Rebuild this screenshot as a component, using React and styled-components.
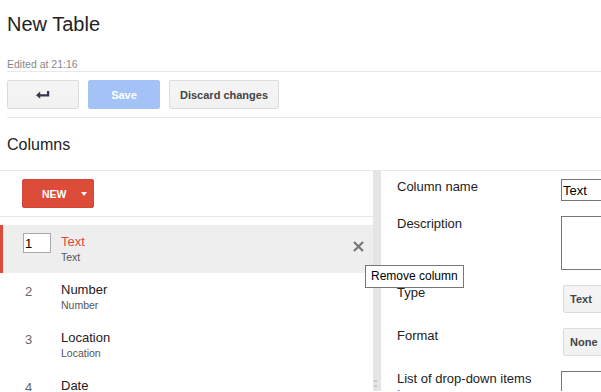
import React from "react";
import styled, { createGlobalStyle, css } from "styled-components";

const GlobalStyle = createGlobalStyle`
  html, body { margin: 0; padding: 0; background: #fff; overflow: hidden; }
  body { font-family: "Liberation Sans", Arial, sans-serif; color: #222; }
  * { box-sizing: border-box; }
`;

const Page = styled.div`
  position: relative;
  width: 100%;
  height: 100vh;
  overflow: hidden;
`;

const Header = styled.header`
  padding: 12px 0 0 7px;
`;

const Title = styled.h1`
  margin: 0;
  font-size: 20px;
  line-height: 24px;
  font-weight: normal;
  color: #222;
`;

const Edited = styled.div`
  margin-top: 22px;
  font-size: 10.5px;
  line-height: 13px;
  color: #888;
`;

const Rule = styled.div`
  height: 1px;
  background: #e8e8e8;
`;

const Toolbar = styled.div`
  display: flex;
  gap: 9px;
  padding: 8px 0;
`;

const Button = styled.button`
  height: 29px;
  min-width: 72px;
  padding: 0 10px;
  border-radius: 2px;
  border: 1px solid #dcdcdc;
  background: linear-gradient(#f5f5f5, #f1f1f1);
  color: #444;
  font-family: "Liberation Sans", Arial, sans-serif;
  font-weight: bold;
  font-size: 11px;
  display: inline-flex;
  align-items: center;
  justify-content: center;
  ${(p) =>
    p.$primary &&
    css`
      background: #a3c3f6;
      border-color: #a3c3f6;
      color: #fff;
    `}
`;

const SectionTitle = styled.h2`
  margin: 0;
  padding: 16px 0 15px 7px;
  font-size: 16px;
  line-height: 21px;
  font-weight: normal;
  color: #222;
`;

const Editor = styled.div`
  display: grid;
  grid-template-columns: 373px 8px 1fr;
  border-top: 1px solid #e8e8e8;
  height: calc(100vh - 171px);
  overflow: hidden;
`;

const LeftPane = styled.div`
  overflow: hidden;
`;

const NewBar = styled.div`
  padding: 8px 0 8px 22px;
  border-bottom: 1px solid #e8e8e8;
`;

const NewButton = styled.button`
  width: 72px;
  height: 29px;
  padding: 0 6px 0 19px;
  display: flex;
  align-items: center;
  justify-content: space-between;
  background: #dd4b39;
  border: 1px solid #d14836;
  border-radius: 2px;
  color: #fff;
  font-family: "Liberation Sans", Arial, sans-serif;
  font-weight: bold;
  font-size: 10.5px;
`;

const Caret = styled.span`
  width: 0;
  height: 0;
  border-left: 3px solid transparent;
  border-right: 3px solid transparent;
  border-top: 4px solid ${(p) => p.$color || "#fff"};
  margin-top: 1px;
`;

const List = styled.div`
  padding-top: 8px;
`;

const Row = styled.div`
  display: flex;
  height: 48px;
  padding-left: 20px;
  border-left: 3px solid ${(p) => (p.$selected ? "#dd4b39" : "transparent")};
  background: ${(p) => (p.$selected ? "#eeeeee" : "transparent")};
`;

const NumberCell = styled.div`
  width: 38px;
  padding: 11px 0 0 2px;
  font-size: 13px;
  line-height: 16px;
  color: #666;
`;

const IndexInput = styled.input`
  display: block;
  width: 28px;
  height: 20px;
  margin: 8px 0 0;
  padding: 0 1px;
  border: 1px solid #a9a9a9;
  background: #fff;
  font-family: "Liberation Sans", Arial, sans-serif;
  font-size: 13px;
  color: #000;
`;

const Info = styled.div`
  padding-top: 8px;
`;

const Name = styled.div`
  font-size: 13px;
  line-height: 17px;
  color: ${(p) => (p.$selected ? "#dd4b39" : "#222")};
`;

const Sub = styled.div`
  font-size: 10.5px;
  line-height: 14px;
  color: #555;
`;

const Remove = styled.span`
  margin: 13px 9px 0 auto;
  width: 11px;
  height: 11px;
  display: block;
`;

const Splitter = styled.div`
  background: #e5e5e5;
  display: flex;
  flex-direction: column;
  justify-content: flex-end;
  align-items: center;
`;

const Grip = styled.div`
  width: 3px;
  height: 9px;
  margin: 0 0 2px -3px;
  background: repeating-linear-gradient(#c8c8c8 0 2px, transparent 2px 5px);
`;

const RightPane = styled.div`
  padding: 8px 0 0 16px;
  overflow: hidden;
`;

const Form = styled.div`
  display: grid;
  grid-template-columns: 164px 1fr;
  row-gap: 15px;
  align-items: start;
`;

const Label = styled.div`
  font-size: 13px;
  line-height: 16px;
  color: #222;
`;

const LearnMore = styled.a`
  display: block;
  color: #15c;
  text-decoration: none;
`;

const TextInput = styled.input`
  display: block;
  width: 160px;
  height: 22px;
  padding: 0 1px;
  border: 1px solid #767676;
  font-family: "Liberation Sans", Arial, sans-serif;
  font-size: 13px;
  color: #000;
`;

const TextArea = styled.textarea`
  display: block;
  width: 160px;
  height: 54px;
  border: 1px solid #767676;
  resize: none;
`;

const SelectButton = styled(Button)`
  margin-left: 2px;
  height: 28px;
  min-width: 0;
  padding: 0 6px;
  justify-content: flex-start;
  gap: 30px;
`;

const Tooltip = styled.div`
  position: absolute;
  left: 365px;
  top: 265px;
  padding: 3px 5px;
  border: 1px solid #767676;
  background: #fff;
  font-size: 12px;
  line-height: 15px;
  color: #000;
  white-space: nowrap;
`;

const BackArrow = () => (
  <svg width="14" height="9" viewBox="0 0 14 9">
    <path d="M0 5.2 L4.2 1.6 L4.2 4.2 L11 4.2 L11 1 L13.2 1 L13.2 6.4 L4.2 6.4 L4.2 8.8 Z" fill="#3d3550" />
  </svg>
);

const CloseIcon = () => (
  <svg width="11" height="11" viewBox="0 0 11 11">
    <path d="M1 1 L10 10 M10 1 L1 10" stroke="#777" strokeWidth="2.2" />
  </svg>
);

const columns = [
  { n: 1, name: "Text", type: "Text" },
  { n: 2, name: "Number", type: "Number" },
  { n: 3, name: "Location", type: "Location" },
  { n: 4, name: "Date", type: "Date" },
];

export default function App() {
  return (
    <Page>
      <GlobalStyle />
      <Header>
        <Title>New Table</Title>
        <Edited>Edited at 21:16</Edited>
        <Rule />
        <Toolbar>
          <Button>
            <BackArrow />
          </Button>
          <Button $primary>Save</Button>
          <Button>Discard changes</Button>
        </Toolbar>
        <Rule />
      </Header>
      <SectionTitle>Columns</SectionTitle>
      <Editor>
        <LeftPane>
          <NewBar>
            <NewButton>
              NEW <Caret />
            </NewButton>
          </NewBar>
          <List>
            {columns.map((c, i) => (
              <Row key={c.n} $selected={i === 0}>
                {i === 0 ? (
                  <NumberCell style={{ padding: 0 }}>
                    <IndexInput defaultValue="1" />
                  </NumberCell>
                ) : (
                  <NumberCell>{c.n}</NumberCell>
                )}
                <Info>
                  <Name $selected={i === 0}>{c.name}</Name>
                  <Sub>{c.type}</Sub>
                </Info>
                {i === 0 && (
                  <Remove>
                    <CloseIcon />
                  </Remove>
                )}
              </Row>
            ))}
          </List>
        </LeftPane>
        <Splitter>
          <Grip />
        </Splitter>
        <RightPane>
          <Form>
            <Label>Column name</Label>
            <TextInput defaultValue="Text" />
            <Label>Description</Label>
            <TextArea />
            <Label>Type</Label>
            <div>
              <SelectButton>
                Text <Caret $color="#444" />
              </SelectButton>
            </div>
            <Label>Format</Label>
            <div>
              <SelectButton>
                None <Caret $color="#444" />
              </SelectButton>
            </div>
            <Label>
              List of drop-down items
              <LearnMore href="#">Learn more</LearnMore>
            </Label>
            <TextArea />
          </Form>
        </RightPane>
      </Editor>
      <Tooltip>Remove column</Tooltip>
    </Page>
  );
}
